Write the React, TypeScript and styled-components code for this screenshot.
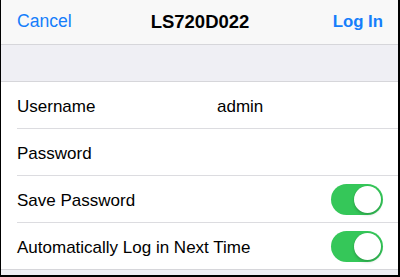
import React from "react";
import styled, { createGlobalStyle } from "styled-components";

const Global = createGlobalStyle`
  html, body { margin: 0; padding: 0; background: #ffffff; }
  body { font-family: "Liberation Sans", Arial, sans-serif; }
`;

const Frame = styled.div`
  width: 400px;
  height: 277px;
  box-sizing: border-box;
  border-left: 1px solid #000;
  border-right: 2px solid #000;
  border-bottom: 2px solid #000;
  background: #efeff4;
  display: flex;
  flex-direction: column;
  overflow: hidden;
`;

const NavBar = styled.div`
  height: 44px;
  flex: 0 0 44px;
  background: #f8f8f8;
  border-bottom: 1px solid #d6d6da;
  display: grid;
  grid-template-columns: 1fr auto 1fr;
  align-items: center;
  padding: 0 15px 0 16px;
`;

const NavButton = styled.span<{ $align: "left" | "right"; $strong?: boolean }>`
  color: #157efb;
  font-size: ${(p) => (p.$strong ? "16.8px" : "17.6px")};
  font-weight: ${(p) => (p.$strong ? 700 : 400)};
  justify-self: ${(p) => (p.$align === "left" ? "start" : "end")};
  margin-top: -1px;
`;

const Title = styled.span`
  font-size: 18.5px;
  font-weight: 700;
  color: #000;
  margin-top: -1px;
`;

const Spacer = styled.div`
  height: 36px;
  flex: 0 0 36px;
  border-bottom: 1px solid #d6d6da;
`;

const Group = styled.div`
  background: #fff;
  border-bottom: 1px solid #d6d6da;
  padding-left: 16px;
`;

const Row = styled.div<{ $last?: boolean }>`
  height: 46px;
  display: flex;
  align-items: center;
  padding-right: 15px;
  border-bottom: ${(p) => (p.$last ? "none" : "1px solid #dcdce0")};
  font-size: 17px;
  color: #000;
`;

const Label = styled.span<{ $width?: number }>`
  flex: ${(p) => (p.$width ? `0 0 ${p.$width}px` : "1 1 auto")};
  padding-top: 3px;
`;

const Value = styled.span`
  flex: 1 1 auto;
  padding-top: 3px;
`;

const Toggle = styled.div`
  width: 52px;
  height: 31px;
  border-radius: 16px;
  background: #35c759;
  position: relative;
  flex: 0 0 auto;
`;

const Knob = styled.div`
  position: absolute;
  top: 2px;
  right: 2px;
  width: 27px;
  height: 27px;
  border-radius: 50%;
  background: #fff;
  box-shadow: 0 2px 3px rgba(0, 0, 0, 0.18), 0 0 0 0.5px rgba(0, 0, 0, 0.06);
`;

function Switch() {
  return (
    <Toggle>
      <Knob />
    </Toggle>
  );
}

export default function App() {
  return (
    <>
      <Global />
      <Frame>
        <NavBar>
          <NavButton $align="left">Cancel</NavButton>
          <Title>LS720D022</Title>
          <NavButton $align="right" $strong>
            Log In
          </NavButton>
        </NavBar>
        <Spacer />
        <Group>
          <Row>
            <Label $width={200}>Username</Label>
            <Value>admin</Value>
          </Row>
          <Row>
            <Label>Password</Label>
          </Row>
          <Row>
            <Label>Save Password</Label>
            <Switch />
          </Row>
          <Row $last>
            <Label>Automatically Log in Next Time</Label>
            <Switch />
          </Row>
        </Group>
      </Frame>
    </>
  );
}
